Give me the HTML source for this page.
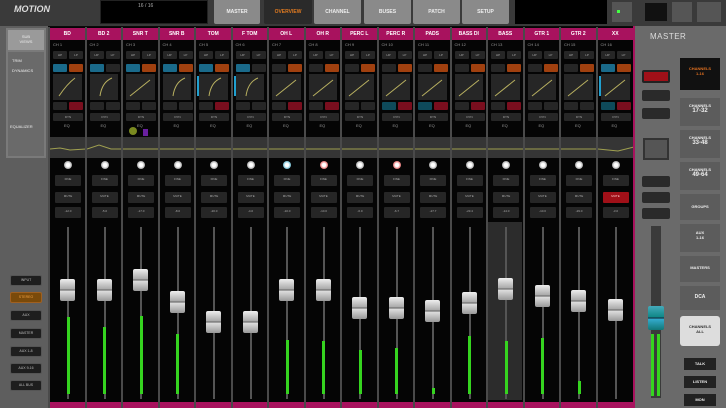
<!DOCTYPE html>
<html><head><meta charset="utf-8"><style>
*{margin:0;padding:0;box-sizing:border-box}
body{width:726px;height:408px;overflow:hidden;background:#0a0a0a;font-family:"Liberation Sans",sans-serif;position:relative;color:#ccc}
.a{position:absolute}
.tab{position:absolute;top:0;height:24px;background:#8a8a8a;color:#eee;font-size:5px;text-align:center;line-height:24px;font-weight:bold;border-radius:0 0 2px 2px}
.s{position:absolute;top:27px;width:36.5px;height:381px;border-left:2px solid #4a4a4a}
.s>*{position:absolute}
.nm{top:1px;left:0;right:0;height:12px;background:#a8125e;color:#fff;font-size:5px;font-weight:bold;text-align:center;line-height:12px}
.sl{top:15px;left:3px;font-size:4px;color:#999}
.b{background:#262626;height:8px;border-radius:1px;font-size:3px;color:#aaa;text-align:center;line-height:8px}
.gr{top:47px;left:3px;right:3px;height:26px;background:#262626}
.eq{top:110px;left:0;right:0;height:21px;background:#353535}
.kn{top:134px;left:14px;width:8px;height:8px;border-radius:50%;background:radial-gradient(#fff 30%,#bbb 60%,#555 100%)}
.tr{top:200px;left:17px;width:2px;height:172px;background:#555}
.cap{left:10px;width:15px;height:22px;border-radius:2px;background:linear-gradient(#eee,#aaa 45%,#666 50%,#ddd 55%,#999);}
.m{left:16.5px;width:3px;background:#35d41f;bottom:14px}
.bot{bottom:0;left:0;right:0;height:6px;background:#a8125e}
.tk{left:1px;width:4px;height:1px;background:#777}
.lb{position:absolute;left:10px;width:32px;height:11px;background:#1e1e1e;border:1px solid #555;border-radius:2px;font-size:3.5px;color:#bbb;text-align:center;line-height:9px}
.rc{position:absolute;left:680px;width:40px;background:#5c5c5c;color:#eee;font-size:4px;text-align:center;font-weight:bold}
</style></head><body>
<!-- top bar -->
<div class="a" style="left:0;top:0;width:726px;height:26px;background:#3a3a3a"></div>
<div class="a" style="left:14px;top:4px;font-size:9px;color:#ddd;font-weight:bold;font-style:italic">MOTION</div>
<div class="a" style="left:100px;top:0;width:108px;height:24px;background:#000;border:1px solid #222"></div>
<div class="a" style="left:138px;top:3px;font-size:5px;color:#aaa">16 / 16</div>
<div class="tab" style="left:214px;width:46px">MASTER</div>
<div class="tab" style="left:264px;width:48px;background:#2a2a2a;color:#e07a20">OVERVIEW</div>
<div class="tab" style="left:314px;width:47px">CHANNEL</div>
<div class="tab" style="left:364px;width:47px">BUSES</div>
<div class="tab" style="left:413px;width:47px">PATCH</div>
<div class="tab" style="left:462px;width:47px">SETUP</div>
<div class="a" style="left:515px;top:0;width:92px;height:24px;background:#000"></div>
<div class="a" style="left:612px;top:2px;width:20px;height:20px;background:#555"></div>
<div class="a" style="left:617px;top:10px;width:3px;height:3px;background:#4f4"></div>
<div class="a" style="left:645px;top:3px;width:22px;height:18px;background:#111"></div>
<div class="a" style="left:672px;top:2px;width:20px;height:20px;background:#555"></div>
<div class="a" style="left:697px;top:2px;width:24px;height:20px;background:#555"></div>
<!-- left panel -->
<div class="a" style="left:0;top:26px;width:48px;height:382px;background:#5e5e5e"></div>
<div class="a" style="left:6px;top:28px;width:40px;height:130px;background:#7a7a7a"></div>
<div class="a" style="left:8px;top:30px;width:36px;height:20px;background:#9a9a9a;color:#eee;font-size:4px;text-align:center;padding-top:4px">SUB<br>VIEWS</div>
<div class="a" style="left:8px;top:52px;width:36px;height:104px;background:#6a6a6a"></div>
<div class="a" style="left:12px;top:58px;font-size:4px;color:#eee">TRIM<br><br>DYNAMICS</div>
<div class="a" style="left:10px;top:124px;font-size:4px;color:#eee">EQUALIZER</div>
<div class="lb" style="top:275px">INPUT</div>
<div class="lb" style="top:292px;background:#7a4a0a;color:#f0a040;border-color:#a06020">STEREO</div>
<div class="lb" style="top:310px">AUX</div>
<div class="lb" style="top:328px">MASTER</div>
<div class="lb" style="top:346px">AUX 1-8</div>
<div class="lb" style="top:363px">AUX 9-16</div>
<div class="lb" style="top:380px">ALL BUS</div>

<!-- strips -->
<div class="a" style="left:48px;top:27px;width:585px;height:381px;background:#050505"></div>
<div class="a" style="left:486px;top:222px;width:36px;height:178px;background:#2c2c2c"></div>

<div class="s" style="left:48px"><div class="nm">BD</div><div class="sl">CH 1</div>
<div class="b" style="top:24px;left:3px;width:14px">HP</div><div class="b" style="top:24px;left:19px;width:14px">LP</div>
<div class="b" style="top:37px;left:3px;width:14px;background:#1a6a8a"></div><div class="b" style="top:37px;left:19px;width:14px;background:#a0400f"></div>
<div class="gr"><svg width="30" height="26"><path d="M6 22 Q14 10 22 4" stroke="#b8b060" fill="none"/></svg></div>
<div class="b" style="top:75px;left:3px;width:14px"></div><div class="b" style="top:75px;left:19px;width:14px;background:#7a0e1e"></div>
<div class="b" style="top:86px;left:3px;width:30px">DYN</div><div class="sl" style="top:96px;left:14px">EQ</div>
<div class="eq"><svg width="36" height="21"><path d="M0 12 L10 11 L20 13 L36 12" stroke="#a0a050" fill="none"/></svg></div>
<div class="kn"></div><div class="b" style="top:148px;left:5px;width:26px;height:11px">FINE</div>
<div class="b" style="top:165px;left:5px;width:26px;height:11px">MUTE</div><div class="b" style="top:180px;left:5px;width:26px;height:11px">-12.0</div>
<div class="tr"></div><div class="m" style="top:290px"></div><div class="cap" style="top:252px"></div><div class="bot"></div></div>

<div class="s" style="left:84.5px"><div class="nm">BD 2</div><div class="sl">CH 2</div>
<div class="b" style="top:24px;left:3px;width:14px">HP</div><div class="b" style="top:24px;left:19px;width:14px">LP</div>
<div class="b" style="top:37px;left:3px;width:14px;background:#1a6a8a"></div><div class="b" style="top:37px;left:19px;width:14px"></div>
<div class="gr"><svg width="30" height="26"><path d="M10 22 Q12 8 22 4" stroke="#b8b060" fill="none"/></svg></div>
<div class="b" style="top:75px;left:3px;width:14px"></div><div class="b" style="top:75px;left:19px;width:14px"></div>
<div class="b" style="top:86px;left:3px;width:30px">DYN</div><div class="sl" style="top:96px;left:14px">EQ</div>
<div class="eq"><svg width="36" height="21"><path d="M0 12 L12 8 L24 12 L36 12" stroke="#a0a050" fill="none"/></svg></div>
<div class="kn"></div><div class="b" style="top:148px;left:5px;width:26px;height:11px">FINE</div>
<div class="b" style="top:165px;left:5px;width:26px;height:11px">MUTE</div><div class="b" style="top:180px;left:5px;width:26px;height:11px">-5.0</div>
<div class="tr"></div><div class="m" style="top:300px"></div><div class="cap" style="top:252px"></div><div class="bot"></div></div>

<div class="s" style="left:121px"><div class="nm">SNR T</div><div class="sl">CH 3</div>
<div class="b" style="top:24px;left:3px;width:14px">HP</div><div class="b" style="top:24px;left:19px;width:14px">LP</div>
<div class="b" style="top:37px;left:3px;width:14px;background:#1a6a8a"></div><div class="b" style="top:37px;left:19px;width:14px;background:#a0400f"></div>
<div class="gr"><svg width="30" height="26"><path d="M4 22 L24 6" stroke="#b8b060" fill="none"/></svg></div>
<div class="b" style="top:75px;left:3px;width:14px"></div><div class="b" style="top:75px;left:19px;width:14px"></div>
<div class="b" style="top:86px;left:3px;width:30px">DYN</div><div class="sl" style="top:96px;left:14px">EQ</div>
<div class="a" style="top:100px;left:6px;width:8px;height:8px;border-radius:50%;background:#7a8a20"></div><div class="a" style="top:102px;left:20px;width:5px;height:7px;background:#6a20a0"></div>
<div class="eq"><svg width="36" height="21"><path d="M0 12 L36 12" stroke="#a0a050" fill="none"/></svg></div>
<div class="kn"></div><div class="b" style="top:148px;left:5px;width:26px;height:11px">FINE</div>
<div class="b" style="top:165px;left:5px;width:26px;height:11px">MUTE</div><div class="b" style="top:180px;left:5px;width:26px;height:11px">-17.0</div>
<div class="tr"></div><div class="m" style="top:289px"></div><div class="cap" style="top:266px;margin-top:-24px"></div><div class="bot"></div></div>

<div class="s" style="left:157.5px"><div class="nm">SNR B</div><div class="sl">CH 4</div>
<div class="b" style="top:24px;left:3px;width:14px">HP</div><div class="b" style="top:24px;left:19px;width:14px">LP</div>
<div class="b" style="top:37px;left:3px;width:14px;background:#1a6a8a"></div><div class="b" style="top:37px;left:19px;width:14px;background:#a0400f"></div>
<div class="gr"><svg width="30" height="26"><path d="M10 22 Q12 8 22 4" stroke="#b8b060" fill="none"/></svg></div>
<div class="b" style="top:75px;left:3px;width:14px"></div><div class="b" style="top:75px;left:19px;width:14px"></div>
<div class="b" style="top:86px;left:3px;width:30px">DYN</div><div class="sl" style="top:96px;left:14px">EQ</div>
<div class="eq"><svg width="36" height="21"><path d="M0 12 L36 12" stroke="#a0a050" fill="none"/></svg></div>
<div class="kn"></div><div class="b" style="top:148px;left:5px;width:26px;height:11px">FINE</div>
<div class="b" style="top:165px;left:5px;width:26px;height:11px">MUTE</div><div class="b" style="top:180px;left:5px;width:26px;height:11px">-8.0</div>
<div class="tr"></div><div class="m" style="top:307px"></div><div class="cap" style="top:264px"></div><div class="bot"></div></div>

<div class="s" style="left:194px"><div class="nm">TOM</div><div class="sl">CH 5</div>
<div class="b" style="top:24px;left:3px;width:14px">HP</div><div class="b" style="top:24px;left:19px;width:14px">LP</div>
<div class="b" style="top:37px;left:3px;width:14px;background:#1a6a8a"></div><div class="b" style="top:37px;left:19px;width:14px;background:#a0400f"></div>
<div class="a" style="top:49px;left:1px;width:3px;height:20px;background:#20a0d0"></div>
<div class="gr"><svg width="30" height="26"><path d="M10 22 Q12 8 22 4" stroke="#b8b060" fill="none"/></svg></div>
<div class="b" style="top:75px;left:3px;width:14px"></div><div class="b" style="top:75px;left:19px;width:14px;background:#7a0e1e"></div>
<div class="b" style="top:86px;left:3px;width:30px">DYN</div><div class="sl" style="top:96px;left:14px">EQ</div>
<div class="eq"><svg width="36" height="21"><path d="M0 12 L36 12" stroke="#a0a050" fill="none"/></svg></div>
<div class="kn"></div><div class="b" style="top:148px;left:5px;width:26px;height:11px">FINE</div>
<div class="b" style="top:165px;left:5px;width:26px;height:11px">MUTE</div><div class="b" style="top:180px;left:5px;width:26px;height:11px">-20.0</div>
<div class="tr"></div><div class="cap" style="top:284px"></div><div class="bot"></div></div>

<div class="s" style="left:230.5px"><div class="nm">F TOM</div><div class="sl">CH 6</div>
<div class="b" style="top:24px;left:3px;width:14px">HP</div><div class="b" style="top:24px;left:19px;width:14px">LP</div>
<div class="b" style="top:37px;left:3px;width:14px;background:#1a6a8a"></div><div class="b" style="top:37px;left:19px;width:14px"></div>
<div class="a" style="top:49px;left:1px;width:3px;height:20px;background:#20a0d0"></div>
<div class="gr"><svg width="30" height="26"><path d="M10 22 Q12 8 22 4" stroke="#b8b060" fill="none"/></svg></div>
<div class="b" style="top:75px;left:3px;width:14px"></div><div class="b" style="top:75px;left:19px;width:14px"></div>
<div class="b" style="top:86px;left:3px;width:30px">DYN</div><div class="sl" style="top:96px;left:14px">EQ</div>
<div class="eq"><svg width="36" height="21"><path d="M0 12 L36 12" stroke="#a0a050" fill="none"/></svg></div>
<div class="kn"></div><div class="b" style="top:148px;left:5px;width:26px;height:11px">FINE</div>
<div class="b" style="top:165px;left:5px;width:26px;height:11px">MUTE</div><div class="b" style="top:180px;left:5px;width:26px;height:11px">-4.0</div>
<div class="tr"></div><div class="cap" style="top:284px"></div><div class="bot"></div></div>

<div class="s" style="left:267px"><div class="nm">OH L</div><div class="sl">CH 7</div>
<div class="b" style="top:24px;left:3px;width:14px">HP</div><div class="b" style="top:24px;left:19px;width:14px">LP</div>
<div class="b" style="top:37px;left:3px;width:14px"></div><div class="b" style="top:37px;left:19px;width:14px;background:#a0400f"></div>
<div class="gr"><svg width="30" height="26"><path d="M4 22 L24 6" stroke="#b8b060" fill="none"/></svg></div>
<div class="b" style="top:75px;left:3px;width:14px"></div><div class="b" style="top:75px;left:19px;width:14px;background:#7a0e1e"></div>
<div class="b" style="top:86px;left:3px;width:30px">DYN</div><div class="sl" style="top:96px;left:14px">EQ</div>
<div class="eq"><svg width="36" height="21"><path d="M0 12 L36 12" stroke="#a0a050" fill="none"/></svg></div>
<div class="kn" style="background:radial-gradient(#fff 30%,#8cd 60%,#357 100%)"></div><div class="b" style="top:148px;left:5px;width:26px;height:11px">FINE</div>
<div class="b" style="top:165px;left:5px;width:26px;height:11px">MUTE</div><div class="b" style="top:180px;left:5px;width:26px;height:11px">-10.0</div>
<div class="tr"></div><div class="m" style="top:313px"></div><div class="cap" style="top:252px"></div><div class="bot"></div></div>

<div class="s" style="left:303.5px"><div class="nm">OH R</div><div class="sl">CH 8</div>
<div class="b" style="top:24px;left:3px;width:14px">HP</div><div class="b" style="top:24px;left:19px;width:14px">LP</div>
<div class="b" style="top:37px;left:3px;width:14px"></div><div class="b" style="top:37px;left:19px;width:14px;background:#a0400f"></div>
<div class="gr"><svg width="30" height="26"><path d="M4 22 L24 6" stroke="#b8b060" fill="none"/></svg></div>
<div class="b" style="top:75px;left:3px;width:14px"></div><div class="b" style="top:75px;left:19px;width:14px;background:#7a0e1e"></div>
<div class="b" style="top:86px;left:3px;width:30px">DYN</div><div class="sl" style="top:96px;left:14px">EQ</div>
<div class="eq"><svg width="36" height="21"><path d="M0 12 L36 12" stroke="#a0a050" fill="none"/></svg></div>
<div class="kn" style="background:radial-gradient(#fff 30%,#e88 60%,#733 100%)"></div><div class="b" style="top:148px;left:5px;width:26px;height:11px">FINE</div>
<div class="b" style="top:165px;left:5px;width:26px;height:11px">MUTE</div><div class="b" style="top:180px;left:5px;width:26px;height:11px">-10.0</div>
<div class="tr"></div><div class="m" style="top:314px"></div><div class="cap" style="top:252px"></div><div class="bot"></div></div>

<div class="s" style="left:340px"><div class="nm">PERC L</div><div class="sl">CH 9</div>
<div class="b" style="top:24px;left:3px;width:14px">HP</div><div class="b" style="top:24px;left:19px;width:14px">LP</div>
<div class="b" style="top:37px;left:3px;width:14px"></div><div class="b" style="top:37px;left:19px;width:14px;background:#a0400f"></div>
<div class="gr"><svg width="30" height="26"><path d="M4 22 L24 6" stroke="#b8b060" fill="none"/></svg></div>
<div class="b" style="top:75px;left:3px;width:14px"></div><div class="b" style="top:75px;left:19px;width:14px"></div>
<div class="b" style="top:86px;left:3px;width:30px">DYN</div><div class="sl" style="top:96px;left:14px">EQ</div>
<div class="eq"><svg width="36" height="21"><path d="M0 12 L36 12" stroke="#a0a050" fill="none"/></svg></div>
<div class="kn"></div><div class="b" style="top:148px;left:5px;width:26px;height:11px">FINE</div>
<div class="b" style="top:165px;left:5px;width:26px;height:11px">MUTE</div><div class="b" style="top:180px;left:5px;width:26px;height:11px">-6.0</div>
<div class="tr"></div><div class="m" style="top:323px"></div><div class="cap" style="top:270px"></div><div class="bot"></div></div>

<div class="s" style="left:376.5px"><div class="nm">PERC R</div><div class="sl">CH 10</div>
<div class="b" style="top:24px;left:3px;width:14px">HP</div><div class="b" style="top:24px;left:19px;width:14px">LP</div>
<div class="b" style="top:37px;left:3px;width:14px"></div><div class="b" style="top:37px;left:19px;width:14px;background:#a0400f"></div>
<div class="gr"><svg width="30" height="26"><path d="M4 22 L24 6" stroke="#b8b060" fill="none"/></svg></div>
<div class="b" style="top:75px;left:3px;width:14px;background:#0e4a5a"></div><div class="b" style="top:75px;left:19px;width:14px;background:#7a0e1e"></div>
<div class="b" style="top:86px;left:3px;width:30px">DYN</div><div class="sl" style="top:96px;left:14px">EQ</div>
<div class="eq"><svg width="36" height="21"><path d="M0 12 L36 12" stroke="#a0a050" fill="none"/></svg></div>
<div class="kn" style="background:radial-gradient(#fff 30%,#e88 60%,#733 100%)"></div><div class="b" style="top:148px;left:5px;width:26px;height:11px">FINE</div>
<div class="b" style="top:165px;left:5px;width:26px;height:11px">MUTE</div><div class="b" style="top:180px;left:5px;width:26px;height:11px">-6.7</div>
<div class="tr"></div><div class="m" style="top:321px"></div><div class="cap" style="top:270px"></div><div class="bot"></div></div>

<div class="s" style="left:413px"><div class="nm">PADS</div><div class="sl">CH 11</div>
<div class="b" style="top:24px;left:3px;width:14px">HP</div><div class="b" style="top:24px;left:19px;width:14px">LP</div>
<div class="b" style="top:37px;left:3px;width:14px"></div><div class="b" style="top:37px;left:19px;width:14px;background:#a0400f"></div>
<div class="gr"><svg width="30" height="26"><path d="M4 22 L24 6" stroke="#b8b060" fill="none"/></svg></div>
<div class="b" style="top:75px;left:3px;width:14px;background:#0e4a5a"></div><div class="b" style="top:75px;left:19px;width:14px;background:#7a0e1e"></div>
<div class="b" style="top:86px;left:3px;width:30px">DYN</div><div class="sl" style="top:96px;left:14px">EQ</div>
<div class="eq"><svg width="36" height="21"><path d="M0 12 L36 12" stroke="#a0a050" fill="none"/></svg></div>
<div class="kn"></div><div class="b" style="top:148px;left:5px;width:26px;height:11px">FINE</div>
<div class="b" style="top:165px;left:5px;width:26px;height:11px">MUTE</div><div class="b" style="top:180px;left:5px;width:26px;height:11px">-27.7</div>
<div class="tr"></div><div class="m" style="top:361px"></div><div class="cap" style="top:273px"></div><div class="bot"></div></div>

<div class="s" style="left:449.5px"><div class="nm">BASS DI</div><div class="sl">CH 12</div>
<div class="b" style="top:24px;left:3px;width:14px">HP</div><div class="b" style="top:24px;left:19px;width:14px">LP</div>
<div class="b" style="top:37px;left:3px;width:14px"></div><div class="b" style="top:37px;left:19px;width:14px;background:#a0400f"></div>
<div class="gr"><svg width="30" height="26"><path d="M4 22 L24 6" stroke="#b8b060" fill="none"/></svg></div>
<div class="b" style="top:75px;left:3px;width:14px"></div><div class="b" style="top:75px;left:19px;width:14px;background:#7a0e1e"></div>
<div class="b" style="top:86px;left:3px;width:30px">DYN</div><div class="sl" style="top:96px;left:14px">EQ</div>
<div class="eq"><svg width="36" height="21"><path d="M0 12 L36 12" stroke="#a0a050" fill="none"/></svg></div>
<div class="kn"></div><div class="b" style="top:148px;left:5px;width:26px;height:11px">FINE</div>
<div class="b" style="top:165px;left:5px;width:26px;height:11px">MUTE</div><div class="b" style="top:180px;left:5px;width:26px;height:11px">-23.4</div>
<div class="tr"></div><div class="m" style="top:309px"></div><div class="cap" style="top:265px"></div><div class="bot"></div></div>

<div class="s" style="left:486px"><div class="nm">BASS</div><div class="sl">CH 13</div>
<div class="b" style="top:24px;left:3px;width:14px">HP</div><div class="b" style="top:24px;left:19px;width:14px">LP</div>
<div class="b" style="top:37px;left:3px;width:14px"></div><div class="b" style="top:37px;left:19px;width:14px;background:#a0400f"></div>
<div class="gr"><svg width="30" height="26"><path d="M4 22 L24 6" stroke="#b8b060" fill="none"/></svg></div>
<div class="b" style="top:75px;left:3px;width:14px"></div><div class="b" style="top:75px;left:19px;width:14px;background:#7a0e1e"></div>
<div class="b" style="top:86px;left:3px;width:30px">DYN</div><div class="sl" style="top:96px;left:14px">EQ</div>
<div class="eq"><svg width="36" height="21"><path d="M0 12 L36 12" stroke="#a0a050" fill="none"/></svg></div>
<div class="kn"></div><div class="b" style="top:148px;left:5px;width:26px;height:11px">FINE</div>
<div class="b" style="top:165px;left:5px;width:26px;height:11px">MUTE</div><div class="b" style="top:180px;left:5px;width:26px;height:11px">-14.0</div>
<div class="tr"></div><div class="m" style="top:314px"></div><div class="cap" style="top:251px"></div><div class="bot"></div></div>

<div class="s" style="left:522.5px"><div class="nm">GTR 1</div><div class="sl">CH 14</div>
<div class="b" style="top:24px;left:3px;width:14px">HP</div><div class="b" style="top:24px;left:19px;width:14px">LP</div>
<div class="b" style="top:37px;left:3px;width:14px"></div><div class="b" style="top:37px;left:19px;width:14px;background:#a0400f"></div>
<div class="gr"><svg width="30" height="26"><path d="M4 22 L24 6" stroke="#b8b060" fill="none"/></svg></div>
<div class="b" style="top:75px;left:3px;width:14px"></div><div class="b" style="top:75px;left:19px;width:14px"></div>
<div class="b" style="top:86px;left:3px;width:30px">DYN</div><div class="sl" style="top:96px;left:14px">EQ</div>
<div class="eq"><svg width="36" height="21"><path d="M0 12 L36 12" stroke="#a0a050" fill="none"/></svg></div>
<div class="kn"></div><div class="b" style="top:148px;left:5px;width:26px;height:11px">FINE</div>
<div class="b" style="top:165px;left:5px;width:26px;height:11px">MUTE</div><div class="b" style="top:180px;left:5px;width:26px;height:11px">-10.0</div>
<div class="tr"></div><div class="m" style="top:311px"></div><div class="cap" style="top:258px"></div><div class="bot"></div></div>

<div class="s" style="left:559px"><div class="nm">GTR 2</div><div class="sl">CH 15</div>
<div class="b" style="top:24px;left:3px;width:14px">HP</div><div class="b" style="top:24px;left:19px;width:14px">LP</div>
<div class="b" style="top:37px;left:3px;width:14px"></div><div class="b" style="top:37px;left:19px;width:14px;background:#a0400f"></div>
<div class="gr"><svg width="30" height="26"><path d="M4 22 L24 6" stroke="#b8b060" fill="none"/></svg></div>
<div class="b" style="top:75px;left:3px;width:14px"></div><div class="b" style="top:75px;left:19px;width:14px"></div>
<div class="b" style="top:86px;left:3px;width:30px">DYN</div><div class="sl" style="top:96px;left:14px">EQ</div>
<div class="eq"><svg width="36" height="21"><path d="M0 12 L36 12" stroke="#a0a050" fill="none"/></svg></div>
<div class="kn"></div><div class="b" style="top:148px;left:5px;width:26px;height:11px">FINE</div>
<div class="b" style="top:165px;left:5px;width:26px;height:11px">MUTE</div><div class="b" style="top:180px;left:5px;width:26px;height:11px">-29.0</div>
<div class="tr"></div><div class="m" style="top:354px"></div><div class="cap" style="top:263px"></div><div class="bot"></div></div>

<div class="s" style="left:595.5px;width:37.5px"><div class="nm">XX</div><div class="sl">CH 16</div>
<div class="b" style="top:24px;left:3px;width:14px">HP</div><div class="b" style="top:24px;left:19px;width:14px">LP</div>
<div class="b" style="top:37px;left:3px;width:14px;background:#1a6a8a"></div><div class="b" style="top:37px;left:19px;width:14px;background:#a0400f"></div>
<div class="a" style="top:49px;left:1px;width:3px;height:20px;background:#20a0d0"></div>
<div class="gr"><svg width="30" height="26"><path d="M4 22 L24 6" stroke="#b8b060" fill="none"/></svg></div>
<div class="b" style="top:75px;left:3px;width:14px;background:#0e4a5a"></div><div class="b" style="top:75px;left:19px;width:14px;background:#7a0e1e"></div>
<div class="b" style="top:86px;left:3px;width:30px">DYN</div><div class="sl" style="top:96px;left:14px">EQ</div>
<div class="eq"><svg width="36" height="21"><path d="M0 12 L20 14 L36 10" stroke="#a0a050" fill="none"/></svg></div>
<div class="kn"></div><div class="b" style="top:148px;left:5px;width:26px;height:11px">FINE</div>
<div class="b" style="top:165px;left:5px;width:26px;height:11px;background:#a01018;color:#fcc">MUTE</div><div class="b" style="top:180px;left:5px;width:26px;height:11px">-3.0</div>
<div class="tr"></div><div class="cap" style="top:272px"></div><div class="bot"></div></div>

<!-- master -->
<div class="a" style="left:633px;top:26px;width:93px;height:382px;background:#6a6a6a;border-left:2px solid #a8125e"></div>
<div class="a" style="left:650px;top:32px;font-size:8px;color:#ddd;letter-spacing:.5px">MASTER</div>
<div class="a" style="left:642px;top:70px;width:28px;height:13px;background:#a01018;border:2px solid #222;border-radius:2px"></div>
<div class="a" style="left:642px;top:90px;width:28px;height:11px;background:#2a2a2a;border-radius:2px"></div>
<div class="a" style="left:642px;top:108px;width:28px;height:11px;background:#2a2a2a;border-radius:2px"></div>
<div class="a" style="left:643px;top:138px;width:26px;height:22px;background:#555;border:2px solid #333"></div>
<div class="a" style="left:642px;top:176px;width:28px;height:11px;background:#2a2a2a;border-radius:2px"></div>
<div class="a" style="left:642px;top:192px;width:28px;height:11px;background:#2a2a2a;border-radius:2px"></div>
<div class="a" style="left:642px;top:208px;width:28px;height:11px;background:#2a2a2a;border-radius:2px"></div>
<div class="a" style="left:651px;top:226px;width:10px;height:172px;background:#3a3a3a"></div>
<div class="a" style="left:651px;top:334px;width:3px;height:62px;background:#35d41f"></div>
<div class="a" style="left:657px;top:334px;width:3px;height:62px;background:#35d41f"></div>
<div class="cap a" style="left:648px;top:306px;width:16px;height:24px;background:linear-gradient(#4ab,#188 45%,#134 50%,#3ac 55%,#177)"></div>
<div class="rc" style="top:58px;height:32px;background:#111;color:#e07020;padding-top:8px">CHANNELS<br>1-16</div>
<div class="rc" style="top:98px;height:28px;padding-top:5px">CHANNELS<br><span style="font-size:6px">17-32</span></div>
<div class="rc" style="top:130px;height:28px;padding-top:5px">CHANNELS<br><span style="font-size:6px">33-48</span></div>
<div class="rc" style="top:162px;height:28px;padding-top:5px">CHANNELS<br><span style="font-size:6px">49-64</span></div>
<div class="rc" style="top:194px;height:26px;padding-top:10px">GROUPS</div>
<div class="rc" style="top:224px;height:28px;padding-top:6px">AUX<br>1-16</div>
<div class="rc" style="top:256px;height:26px;padding-top:9px">MASTERS</div>
<div class="rc" style="top:286px;height:24px;padding-top:8px;font-size:5px">DCA</div>
<div class="rc" style="top:316px;height:30px;background:#ddd;color:#333;border-radius:3px;padding-top:8px">CHANNELS<br>ALL</div>
<div class="rc" style="top:358px;height:12px;background:#222;left:684px;width:32px;line-height:12px">TALK</div>
<div class="rc" style="top:376px;height:12px;background:#222;left:684px;width:32px;line-height:12px">LISTEN</div>
<div class="rc" style="top:394px;height:12px;background:#222;left:684px;width:32px;line-height:12px">MON</div>
</body></html>
